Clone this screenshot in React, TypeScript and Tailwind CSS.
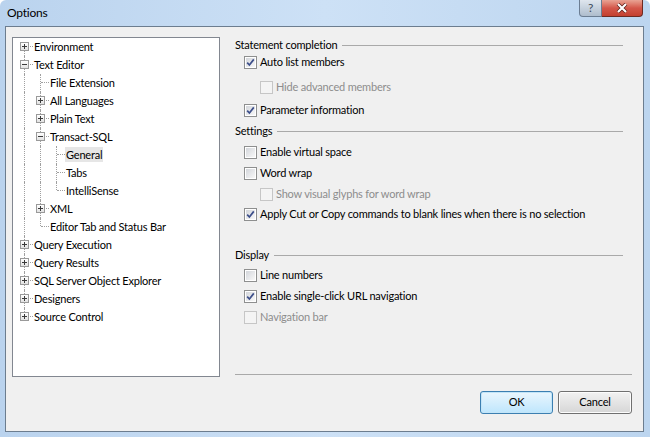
import React from "react";

type Row = {
  t: string;
  l: number;
  e?: "+" | "-";
  anc: boolean[];
  last?: boolean;
  first?: boolean;
  sel?: boolean;
};

const rows: Row[] = [
  { t: "Environment", l: 0, e: "+", anc: [], first: true },
  { t: "Text Editor", l: 0, e: "-", anc: [] },
  { t: "File Extension", l: 1, anc: [true] },
  { t: "All Languages", l: 1, e: "+", anc: [true] },
  { t: "Plain Text", l: 1, e: "+", anc: [true] },
  { t: "Transact-SQL", l: 1, e: "-", anc: [true] },
  { t: "General", l: 2, anc: [true, true], sel: true },
  { t: "Tabs", l: 2, anc: [true, true] },
  { t: "IntelliSense", l: 2, anc: [true, true], last: true },
  { t: "XML", l: 1, e: "+", anc: [true] },
  { t: "Editor Tab and Status Bar", l: 1, anc: [true], last: true },
  { t: "Query Execution", l: 0, e: "+", anc: [] },
  { t: "Query Results", l: 0, e: "+", anc: [] },
  { t: "SQL Server Object Explorer", l: 0, e: "+", anc: [] },
  { t: "Designers", l: 0, e: "+", anc: [] },
  { t: "Source Control", l: 0, e: "+", anc: [], last: true },
];

function Expander({ kind }: { kind: "+" | "-" }) {
  return (
    <div className="absolute left-[4px] top-[4px] w-[9px] h-[9px] border border-[#9a9a9a] bg-linear-to-b from-white to-[#e2e2e2]">
      <div className="absolute left-[1px] top-[3px] w-[5px] h-px bg-[#3a3a3a]" />
      {kind === "+" && <div className="absolute left-[3px] top-[1px] w-px h-[5px] bg-[#3a3a3a]" />}
    </div>
  );
}

function TreeRow({ r }: { r: Row }) {
  return (
    <div className="flex items-center h-[18px]">
      {r.anc.map((v, i) => (
        <div key={i} className="relative w-[16px] h-[18px] shrink-0">
          {v && <div className="absolute left-[8px] top-0 h-[18px] border-l border-dotted border-[#a0a0a0]" />}
        </div>
      ))}
      <div className="relative w-[16px] h-[18px] shrink-0">
        <div
          className={
            "absolute left-[8px] border-l border-dotted border-[#a0a0a0] " +
            (r.first ? "top-[8px] h-[10px]" : r.last ? "top-0 h-[8px]" : "top-0 h-[18px]")
          }
        />
        <div className="absolute left-[9px] top-[8px] w-[8px] border-t border-dotted border-[#a0a0a0]" />
        {r.e && <Expander kind={r.e} />}
      </div>
      <span
        className={
          "ml-[1px] px-[1px] mb-[2px] leading-[15px] whitespace-nowrap " + (r.sel ? "bg-[#e6e6e6]" : "")
        }
      >
        {r.t}
      </span>
    </div>
  );
}

function Check({ checked, disabled }: { checked?: boolean; disabled?: boolean }) {
  return (
    <div
      className={
        "w-[13px] h-[13px] shrink-0 border p-px " +
        (disabled ? "border-[#c6c6c6] bg-[#f4f4f4]" : "border-[#8e8f8f] bg-white")
      }
    >
      <div
        className={
          "w-full h-full relative " +
          (disabled ? "bg-[#f4f4f4]" : "bg-linear-to-br from-[#d3d6db] to-[#f8f8f8]")
        }
      >
        {checked && (
          <svg viewBox="0 0 9 9" className="absolute inset-0 w-[9px] h-[9px]">
            <path d="M1.2 4.6 L3.4 7 L7.8 1.4" fill="none" stroke="#3d4f8a" strokeWidth="1.7" />
          </svg>
        )}
      </div>
    </div>
  );
}

function Option({
  label,
  checked,
  disabled,
  indent,
  mt,
}: {
  label: string;
  checked?: boolean;
  disabled?: boolean;
  indent?: boolean;
  mt: string;
}) {
  return (
    <div className={"flex items-center h-[18px] gap-[3px] " + mt + " " + (indent ? "pl-[25px]" : "pl-[9px]")}>
      <Check checked={checked} disabled={disabled} />
      <span className={"whitespace-nowrap " + (disabled ? "text-[#8d8d8d]" : "text-black")}>{label}</span>
    </div>
  );
}

function Header({ label, mt }: { label: string; mt: string }) {
  return (
    <div className={"flex items-center h-[16px] pr-[9px] " + mt}>
      <span className="whitespace-nowrap">{label}</span>
      <div className="flex-1 ml-[5px] h-px bg-[#a9a9a9]" />
    </div>
  );
}

export default function App() {
  return (
    <div className="w-[650px] h-[437px] flex flex-col font-['Lato',sans-serif] text-[11px] tracking-[-0.2px] text-black bg-linear-to-r from-[#bad3ee] via-[#cde1f6] to-[#bcd5ef] rounded-t-[6px] overflow-hidden">
      <div className="h-[26px] flex items-start justify-between pl-[7px] pr-[7px] shrink-0">
        <span className="mt-[5px] leading-[16px] text-[12px]">Options</span>
        <div className="flex">
          <div className="w-[23px] h-[17px] border border-t-0 border-[#6b7d92] rounded-bl-[4px] bg-linear-to-b from-[#dfe6ee] to-[#aebdcd] flex items-center justify-center text-[#3c4a5c] text-[12px] leading-none">
            ?
          </div>
          <div className="w-[41px] h-[17px] border border-t-0 border-l-0 border-[#6d2a22] rounded-br-[4px] bg-linear-to-b from-[#e8a394] via-[#d4574a] to-[#c3402f] flex items-center justify-center">
            <svg viewBox="0 0 12 10" className="w-[12px] h-[10px]">
              <path d="M2 1 L10 9 M10 1 L2 9" stroke="#5a1d16" strokeWidth="3.6" />
              <path d="M2 1 L10 9 M10 1 L2 9" stroke="#ffffff" strokeWidth="2.2" />
            </svg>
          </div>
        </div>
      </div>
      <div className="ml-[5px] mr-[6px] h-[406px] border border-[#6c7d8f] bg-[#f0f0f0] flex flex-col">
        <div className="flex pt-[10px] pl-[6px]">
          <div className="w-[208px] h-[340px] border border-[#828790] bg-white pl-[3px] shrink-0">
            {rows.map((r, i) => (
              <TreeRow key={i} r={r} />
            ))}
          </div>
          <div className="flex-1 min-w-0 ml-[15px] mr-[11px] h-[340px] flex flex-col">
            <Header label="Statement completion" mt="mt-0" />
            <Option label="Auto list members" checked mt="mt-0" />
            <Option label="Hide advanced members" disabled indent mt="mt-[7px]" />
            <Option label="Parameter information" checked mt="mt-[5px]" />
            <Header label="Settings" mt="mt-[4px]" />
            <Option label="Enable virtual space" mt="mt-[4px]" />
            <Option label="Word wrap" mt="mt-[3px]" />
            <Option label="Show visual glyphs for word wrap" disabled indent mt="mt-[3px]" />
            <Option
              label="Apply Cut or Copy commands to blank lines when there is no selection"
              checked
              mt="mt-[2px]"
            />
            <Header label="Display" mt="mt-[24px]" />
            <Option label="Line numbers" mt="mt-[3px]" />
            <Option label="Enable single-click URL navigation" checked mt="mt-[3px]" />
            <Option label="Navigation bar" disabled mt="mt-[3px]" />
            <div className="mt-auto mb-[2px] h-px bg-[#a9a9a9]" />
          </div>
        </div>
        <div className="flex justify-end gap-[5px] pr-[11px] mt-[14px]">
          <div className="w-[73px] h-[23px] rounded-[3px] border border-[#3c7fb1] bg-linear-to-b from-[#eaf6fd] to-[#bee6fd] shadow-[inset_0_0_0_1px_#c3e5f8] flex items-center justify-center">
            OK
          </div>
          <div className="w-[74px] h-[23px] rounded-[3px] border border-[#707070] bg-linear-to-b from-[#f2f2f2] to-[#d6d6d6] shadow-[inset_0_0_0_1px_#fcfcfc] flex items-center justify-center">
            Cancel
          </div>
        </div>
      </div>
    </div>
  );
}
